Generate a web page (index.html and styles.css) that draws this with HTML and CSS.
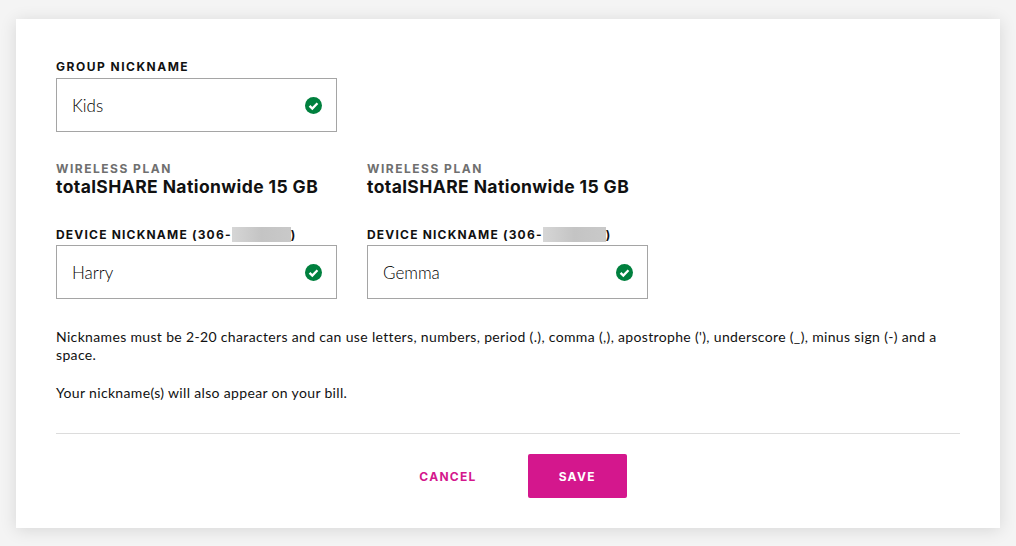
FILE: index.html
```html
<!DOCTYPE html>
<html lang="en">
<head>
    <meta charset="UTF-8">
    <meta name="viewport" content="width=device-width, initial-scale=1.0">
    <title>Edit Nicknames</title>
    <link rel="stylesheet" href="styles.css">
</head>
<body>

<div class="card">
    <div class="field group-field">
        <label class="field-label" for="groupNickname">GROUP NICKNAME</label>
        <div class="input-box">
            <input type="text" id="groupNickname" value="Kids">
            <svg class="check-icon" viewBox="0 0 16 16"><circle cx="8" cy="8" r="8" fill="#00803e"/><path d="M4.3 8.3l2.6 2.6 4.8-5" fill="none" stroke="#fff" stroke-width="2.2"/></svg>
        </div>
    </div>

    <div class="devices">
        <div class="device">
            <div class="plan-label">WIRELESS PLAN</div>
            <div class="plan-name">totalSHARE Nationwide 15 GB</div>
            <div class="field">
                <label class="field-label device-label" for="deviceOne">DEVICE NICKNAME (306-<span class="blur-number"></span>)</label>
                <div class="input-box">
                    <input type="text" id="deviceOne" value="Harry">
                    <svg class="check-icon" viewBox="0 0 16 16"><circle cx="8" cy="8" r="8" fill="#00803e"/><path d="M4.3 8.3l2.6 2.6 4.8-5" fill="none" stroke="#fff" stroke-width="2.2"/></svg>
                </div>
            </div>
        </div>
        <div class="device">
            <div class="plan-label">WIRELESS PLAN</div>
            <div class="plan-name">totalSHARE Nationwide 15 GB</div>
            <div class="field">
                <label class="field-label device-label" for="deviceTwo">DEVICE NICKNAME (306-<span class="blur-number wide"></span>)</label>
                <div class="input-box">
                    <input type="text" id="deviceTwo" value="Gemma">
                    <svg class="check-icon" viewBox="0 0 16 16"><circle cx="8" cy="8" r="8" fill="#00803e"/><path d="M4.3 8.3l2.6 2.6 4.8-5" fill="none" stroke="#fff" stroke-width="2.2"/></svg>
                </div>
            </div>
        </div>
    </div>

    <p class="note">Nicknames must be 2-20 characters and can use letters, numbers, period (.), comma (,), apostrophe ('), underscore (_), minus sign (-) and a space.</p>
    <p class="note">Your nickname(s) will also appear on your bill.</p>

    <div class="actions">
        <button class="cancel-btn">CANCEL</button>
        <button class="save-btn">SAVE</button>
    </div>
</div>

</body>
</html>
```

FILE: styles.css
```css
body {
    font-family: "Open Sans", sans-serif;
    margin: 0;
    padding: 19px 16px 18px;
    background-color: #f4f4f4;
    color: #111;
}
.card {
    background-color: #fff;
    height: 509px;
    box-sizing: border-box;
    padding: 41px 40px 0;
    box-shadow: 0 2px 16px rgba(0, 0, 0, 0.12);
}
.field {
    width: 281px;
}
.field-label {
    display: block;
    height: 18px;
    font-family: Inter, sans-serif;
    font-size: 12px;
    line-height: 14px;
    font-weight: 700;
    letter-spacing: 1.5px;
    white-space: nowrap;
}
.device-label {
    letter-spacing: 1.2px;
}
.input-box {
    display: flex;
    align-items: center;
    height: 54px;
    box-sizing: border-box;
    border: 1px solid #a5a5a5;
    padding: 0 14px 0 15px;
}
.input-box input {
    flex: 1;
    min-width: 0;
    border: none;
    outline: none;
    padding: 0;
    font-family: Lato, sans-serif;
    font-size: 17px;
    font-weight: 300;
    color: #000;
}
.check-icon {
    width: 17px;
    height: 17px;
    flex: none;
}
.devices {
    display: flex;
    gap: 30px;
    margin-top: 30px;
}
.device {
    width: 281px;
}
.plan-label {
    font-family: Inter, sans-serif;
    font-size: 12px;
    line-height: 14px;
    font-weight: 700;
    letter-spacing: 1.5px;
    color: #6f6f6f;
}
.plan-name {
    font-family: Inter, sans-serif;
    font-size: 17.5px;
    line-height: 20px;
    font-weight: 700;
    letter-spacing: 0.4px;
    margin: 1px 0 30px;
    white-space: nowrap;
}
.blur-number {
    display: inline-block;
    width: 59px;
    height: 15px;
    vertical-align: -3px;
    background: linear-gradient(90deg, #d6d6d6, #c4c4c4 50%, #c9c9c9);
}
.blur-number.wide {
    width: 63px;
}
.note {
    font-family: Lato, sans-serif;
    font-size: 14px;
    line-height: 18px;
    letter-spacing: 0.34px;
    margin: 0 0 20px;
}
.devices + .note {
    margin-top: 29px;
}
.actions {
    display: flex;
    justify-content: center;
    align-items: center;
    gap: 51px;
    border-top: 1px solid #dcdcdc;
    margin-top: 31px;
    padding: 20px 0 0 30px;
}
.actions button {
    font-family: Inter, sans-serif;
    font-size: 12px;
    font-weight: 700;
    letter-spacing: 1.3px;
    border: none;
    cursor: pointer;
}
.cancel-btn {
    background: none;
    color: #d4178d;
    padding: 0;
}
.save-btn {
    width: 99px;
    height: 44px;
    background-color: #d4178d;
    color: #fff;
    border-radius: 2px;
}
```
